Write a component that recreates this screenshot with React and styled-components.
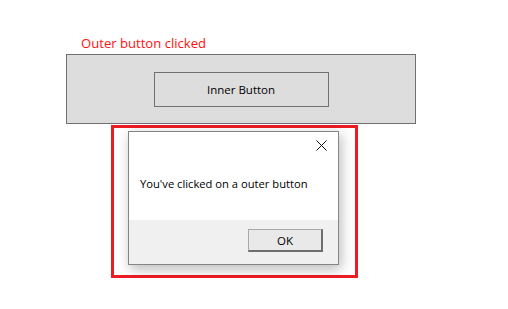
import React from 'react';
import styled, { createGlobalStyle } from 'styled-components';

const GlobalStyle = createGlobalStyle`
  html, body {
    margin: 0;
    padding: 0;
    background: #ffffff;
  }
  body {
    font-family: "Open Sans", "Noto Sans", sans-serif;
    color: #000000;
  }
`

const Page = styled.div`
  display: flex;
  flex-direction: column;
  align-items: flex-start;
  padding: 34px 0 0 66px;
`

const StatusLabel = styled.div`
  margin-left: 15px;
  height: 19px;
  font-size: 13.1px;
  line-height: 19px;
  color: #ff1010;
`

const OuterButton = styled.div`
  box-sizing: border-box;
  margin-top: 1px;
  width: 350px;
  height: 70px;
  border: 1px solid #707070;
  background: #dddddd;
  display: flex;
  align-items: center;
  justify-content: center;
`

const InnerButton = styled.div`
  box-sizing: border-box;
  width: 175px;
  height: 35px;
  border: 1px solid #707070;
  background: #dddddd;
  display: flex;
  align-items: center;
  justify-content: center;
  font-size: 11.5px;
`

const Highlight = styled.div`
  box-sizing: border-box;
  margin: 1px 0 0 45px;
  width: 247px;
  height: 153px;
  border: 3px solid #ed1c24;
  padding: 3px 0 0 14px;
`

const Dialog = styled.div`
  box-sizing: border-box;
  width: 211px;
  height: 134px;
  border: 1px solid #858585;
  background: #ffffff;
  box-shadow: 2px 4px 12px rgba(0, 0, 0, 0.28);
  display: flex;
  flex-direction: column;
`

const DialogHeader = styled.div`
  height: 34px;
  display: flex;
  justify-content: flex-end;
  align-items: flex-start;
  padding: 8px 11px 0 0;
  box-sizing: border-box;
`

const CloseIcon = styled.svg`
  display: block;
  width: 11px;
  height: 11px;
`

const Message = styled.div`
  flex: 1;
  padding: 10px 0 0 11px;
  font-size: 11.2px;
  line-height: 16px;
`

const Footer = styled.div`
  box-sizing: border-box;
  height: 44px;
  background: #f0f0f0;
  display: flex;
  justify-content: flex-end;
  align-items: flex-start;
  padding: 9px 15px 0 0;
`

const OkButton = styled.div`
  box-sizing: border-box;
  width: 75px;
  height: 23px;
  background: #e9e9e9;
  border: 1px solid #a8a8a8;
  border-right: 2px solid #6e6e6e;
  border-bottom: 2px solid #6e6e6e;
  display: flex;
  align-items: center;
  justify-content: center;
  font-size: 11.5px;
`

export default function App() {
  return (
    <>
      <GlobalStyle />
      <Page>
        <StatusLabel>Outer button clicked</StatusLabel>
        <OuterButton>
          <InnerButton>Inner Button</InnerButton>
        </OuterButton>
        <Highlight>
          <Dialog>
            <DialogHeader>
              <CloseIcon viewBox="0 0 11 11">
                <path d="M0.5 0.5 L10.5 10.5 M10.5 0.5 L0.5 10.5" stroke="#111" strokeWidth="1" fill="none" />
              </CloseIcon>
            </DialogHeader>
            <Message>You've clicked on a outer button</Message>
            <Footer>
              <OkButton>OK</OkButton>
            </Footer>
          </Dialog>
        </Highlight>
      </Page>
    </>
  );
}
